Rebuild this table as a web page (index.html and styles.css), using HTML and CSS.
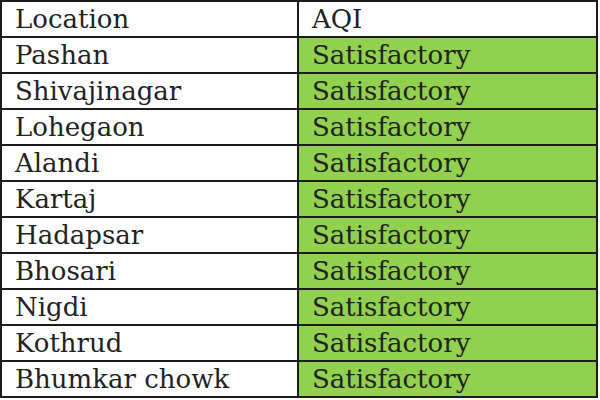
FILE: index.html
```html
<!DOCTYPE html>
<html>
<head>
<meta charset="utf-8">
<link rel="stylesheet" href="styles.css">
</head>
<body>
<table class="aqi">
  <tr><td class="loc">Location</td><td class="val">AQI</td></tr>
  <tr><td class="loc">Pashan</td><td class="val good">Satisfactory</td></tr>
  <tr><td class="loc">Shivajinagar</td><td class="val good">Satisfactory</td></tr>
  <tr><td class="loc">Lohegaon</td><td class="val good">Satisfactory</td></tr>
  <tr><td class="loc">Alandi</td><td class="val good">Satisfactory</td></tr>
  <tr><td class="loc">Kartaj</td><td class="val good">Satisfactory</td></tr>
  <tr><td class="loc">Hadapsar</td><td class="val good">Satisfactory</td></tr>
  <tr><td class="loc">Bhosari</td><td class="val good">Satisfactory</td></tr>
  <tr><td class="loc">Nigdi</td><td class="val good">Satisfactory</td></tr>
  <tr><td class="loc">Kothrud</td><td class="val good">Satisfactory</td></tr>
  <tr><td class="loc">Bhumkar chowk</td><td class="val good">Satisfactory</td></tr>
</table>
</body>
</html>
```
FILE: styles.css
```css
html, body {
  margin: 0;
  padding: 0;
  background: #ffffff;
}
.aqi {
  border-collapse: collapse;
  width: 598px;
  table-layout: fixed;
  font-family: "DejaVu Serif", serif;
  font-size: 26px;
  color: #222222;
}
.aqi tr {
  height: 36px;
}
.aqi td {
  border: 2px solid #1c1c1c;
  padding: 0 0 0 13px;
  line-height: 34px;
  height: 34px;
  vertical-align: middle;
  white-space: nowrap;
  overflow: hidden;
}
.loc {
  width: 282px;
}
.good {
  background: #92d050;
}
```
